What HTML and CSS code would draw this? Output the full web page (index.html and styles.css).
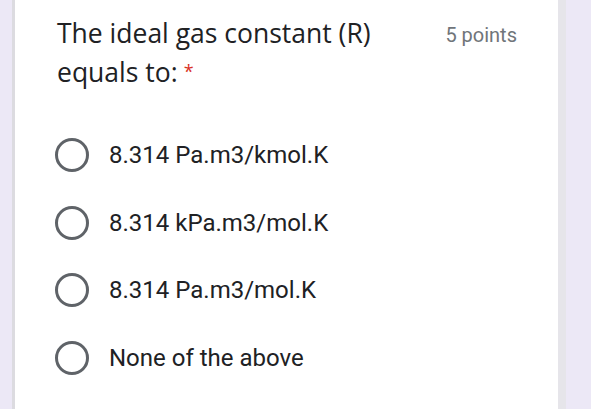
FILE: index.html
```html
<!DOCTYPE html>
<html>
<head>
<meta charset="utf-8">
<link rel="stylesheet" href="styles.css">
</head>
<body>
<div class="page">
  <div class="card">
    <div class="header">
      <div class="title"><span class="qtext">The ideal gas constant (R) equals to:</span><span class="req">*</span></div>
      <div class="points">5 points</div>
    </div>
    <div class="options">
      <div class="option"><span class="radio"></span><span class="label">8.314 Pa.m3/kmol.K</span></div>
      <div class="option"><span class="radio"></span><span class="label">8.314 kPa.m3/mol.K</span></div>
      <div class="option"><span class="radio"></span><span class="label">8.314 Pa.m3/mol.K</span></div>
      <div class="option"><span class="radio"></span><span class="label">None of the above</span></div>
    </div>
  </div>
</div>
</body>
</html>
```
FILE: styles.css
```css
html, body {
  margin: 0;
  padding: 0;
  background: #ece8f6;
  height: 100%;
  overflow: hidden;
}
.page {
  padding-left: 12px;
}
.card {
  height: 409px;
  background: #fff;
  border-left: 3px solid #dcdbe0;
  border-right: 8px solid #e6e5ea;
  padding: 0 0 0 42px;
  box-sizing: border-box;
  width: 554px;
}
.header {
  display: flex;
  justify-content: space-between;
  align-items: flex-start;
  padding-top: 14px;
}
.title {
  font-family: "Open Sans", sans-serif;
  font-size: 26.5px;
  line-height: 39px;
  color: #202124;
  width: 345px;
}
.req {
  display: inline-block;
  color: #d93025;
  font-size: 18px;
  line-height: 1;
  vertical-align: 4px;
  margin-left: 6px;
}
.points {
  font-family: Roboto, sans-serif;
  font-size: 20px;
  color: #70757a;
  padding-top: 9px;
  margin-right: 41px;
}
.options {
  padding-top: 46px;
  display: flex;
  flex-direction: column;
  gap: 33.5px;
}
.option {
  display: flex;
  align-items: center;
  gap: 20px;
  height: 34px;
}
.radio {
  width: 34px;
  height: 34px;
  box-sizing: border-box;
  border: 3px solid #5f6368;
  border-radius: 50%;
  flex: none;
  margin-left: -2px;
}
.label {
  font-family: Roboto, sans-serif;
  font-size: 24px;
  color: #202124;
}
```
